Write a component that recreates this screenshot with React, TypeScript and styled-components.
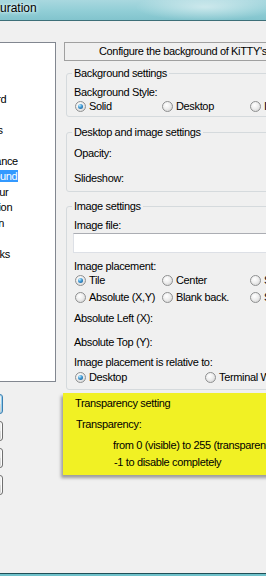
import React from 'react'
import styled, { createGlobalStyle } from 'styled-components'

const GlobalStyle = createGlobalStyle`
	html, body {
		margin: 0;
		padding: 0;
		background: #f0f0f0;
	}
	body {
		font-family: "Liberation Sans", Arial, sans-serif;
		font-size: 11px;
		letter-spacing: -0.35px;
		color: #111;
	}
	#root {
		width: 266px;
		height: 576px;
		overflow: hidden;
	}
`

const Window = styled.div`
	display: flex;
	flex-direction: column;
	width: 266px;
	height: 576px;
	overflow: hidden;
`

const TitleBar = styled.div`
	flex: none;
	height: 20px;
	display: flex;
	align-items: flex-start;
	border-bottom: 1px solid #3d6f78;
	background:
		radial-gradient(ellipse 70px 14px at 205px 7px, rgba(255, 255, 255, 0.5), rgba(255, 255, 255, 0)),
		linear-gradient(180deg, #a9d8df 0%, #91ced6 55%, #82c4cd 100%);
`

const TitleText = styled.span`
	font-size: 12px;
	line-height: 16px;
	letter-spacing: 0;
	color: #000;
	text-shadow: 0 0 5px #eaf7f9, 0 0 3px #eaf7f9;
	white-space: nowrap;
`

const Main = styled.div`
	flex: 1;
	min-height: 0;
	display: flex;
	padding-top: 21px;
	overflow: hidden;
`

const LeftCol = styled.div`
	flex: none;
	width: 56px;
	display: flex;
	flex-direction: column;
`

const TreePanel = styled.div`
	box-sizing: border-box;
	height: 340px;
	background: #fff;
	border: 1px solid #828790;
	border-left: none;
	padding-top: 2px;
	overflow: hidden;
`

const TreeList = styled.div`
	margin-left: -71px;
`

const TreeRow = styled.div<{ $level: number }>`
	height: 15.5px;
	line-height: 15.5px;
	padding-left: ${p => p.$level * 16}px;
	white-space: nowrap;
	color: #000;
`

const TreeLabel = styled.span<{ $selected?: boolean }>`
	display: inline-block;
	line-height: 12px;
	padding: 0 1px;
	background: ${p => (p.$selected ? '#3399ff' : 'transparent')};
	color: ${p => (p.$selected ? '#fff' : '#000')};
`

const ButtonStack = styled.div`
	display: flex;
	flex-direction: column;
	gap: 7px;
	width: 75px;
	margin: 12px 0 0 -72px;
`

const PushButton = styled.div<{ $default?: boolean }>`
	box-sizing: border-box;
	height: 20px;
	border: 1px solid ${p => (p.$default ? '#3c7fb1' : '#707070')};
	border-radius: 3px;
	background: linear-gradient(180deg, #f2f2f2 0%, #ebebeb 48%, #dddddd 52%, #cfcfcf 100%);
	box-shadow: ${p => (p.$default ? 'inset 0 0 0 1px #98d1ef' : 'inset 0 0 0 1px #fcfcfc')};
	text-align: center;
	line-height: 18px;
`

const RightCol = styled.div`
	flex: none;
	width: 330px;
	margin-left: 8px;
	display: flex;
	flex-direction: column;
`

const HeaderBox = styled.div`
	box-sizing: border-box;
	height: 19px;
	line-height: 17px;
	padding-left: 34px;
	border: 1px solid #a0a0a0;
	white-space: nowrap;
	color: #000;
`

const GroupBox = styled.fieldset<{ $mt: number; $pb: number }>`
	margin: ${p => p.$mt}px 0 0 2px;
	padding: 0 0 ${p => p.$pb}px 7px;
	min-width: 0;
	border: 1px solid #d5dadd;
	border-radius: 3px;
`

const Legend = styled.legend`
	padding: 0 2px;
	margin-left: -2px;
	line-height: 14px;
	color: #000;
`

const Line = styled.div<{ $mt?: number; $indent?: number }>`
	height: 14px;
	line-height: 14px;
	margin-top: ${p => p.$mt ?? 0}px;
	padding-left: ${p => p.$indent ?? 0}px;
	white-space: nowrap;
	color: #000;
`

const RadioRow = styled.div<{ $cols: string; $mt?: number }>`
	display: grid;
	grid-template-columns: ${p => p.$cols};
	align-items: center;
	height: 14px;
	margin: ${p => p.$mt ?? 0}px 0 0 1px;
	white-space: nowrap;
	color: #000;
`

const RadioItem = styled.label`
	display: flex;
	align-items: center;
	gap: 3px;
`

const RadioDot = styled.span<{ $checked?: boolean }>`
	box-sizing: border-box;
	width: 11px;
	height: 11px;
	border-radius: 50%;
	border: 1px solid #8f9091;
	background: radial-gradient(circle at 40% 35%, #ffffff 0%, #eeeeee 45%, #cdcdcd 100%);
	display: grid;
	place-items: center;
	&::after {
		content: '';
		width: 5px;
		height: 5px;
		border-radius: 50%;
		display: ${p => (p.$checked ? 'block' : 'none')};
		background: radial-gradient(circle at 35% 30%, #c4ecfc 0%, #3f98d4 45%, #0e4e84 100%);
	}
`

const TextBox = styled.div`
	box-sizing: border-box;
	height: 20px;
	margin: 1px 0 0 -1px;
	background: #fff;
	border: 1px solid #dde0e6;
	border-top-color: #abadb3;
`

const YellowNote = styled.div`
	box-sizing: border-box;
	height: 82px;
	margin: 3px 0 0 -1px;
	padding: 3px 0 0 12px;
	background: #f1f124;
	box-shadow: -2px 3px 3px rgba(0, 0, 0, 0.35);
`

const Taskbar = styled.div`
	flex: none;
	box-sizing: border-box;
	height: 3px;
	border-top: 1px solid #1f4f57;
	background: #6fc2cb;
`

function Radio(props: { label: string; checked?: boolean }) {
	return (
		<RadioItem>
			<RadioDot $checked={props.checked} />
			<span>{props.label}</span>
		</RadioItem>
	)
}

const treeItems: { label: string; level: number; selected?: boolean }[] = [
	{ label: 'Session', level: 0 },
	{ label: 'Logging', level: 1 },
	{ label: 'Terminal', level: 0 },
	{ label: 'Keyboard', level: 2 },
	{ label: 'Bell', level: 2 },
	{ label: 'Features', level: 2 },
	{ label: 'Window', level: 1 },
	{ label: 'Appearance', level: 2 },
	{ label: 'Background', level: 2, selected: true },
	{ label: 'Behaviour', level: 2 },
	{ label: 'Translation', level: 2 },
	{ label: 'Selection', level: 2 },
	{ label: 'Colours', level: 2 },
	{ label: 'Hyperlinks', level: 2 },
	{ label: 'Connection', level: 0 },
	{ label: 'Data', level: 1 },
	{ label: 'Proxy', level: 1 },
	{ label: 'Telnet', level: 1 },
	{ label: 'Rlogin', level: 1 },
	{ label: 'SSH', level: 1 },
	{ label: 'Serial', level: 1 },
]

export default function App() {
	return (
		<Window>
			<GlobalStyle />
			<TitleBar>
				<TitleText>uration</TitleText>
			</TitleBar>
			<Main>
				<LeftCol>
					<TreePanel>
						<TreeList>
							{ treeItems.map(item => (
								<TreeRow key={ item.label } $level={ item.level }>
									<TreeLabel $selected={ item.selected }>{ item.label }</TreeLabel>
								</TreeRow>
							)) }
						</TreeList>
					</TreePanel>
					<ButtonStack>
						<PushButton $default>Open</PushButton>
						<PushButton>Cancel</PushButton>
						<PushButton>About</PushButton>
						<PushButton>Help</PushButton>
					</ButtonStack>
				</LeftCol>
				<RightCol>
					<HeaderBox>Configure the background of KiTTY's window</HeaderBox>

					<GroupBox $mt={ 5 } $pb={ 3 }>
						<Legend>Background settings</Legend>
						<Line $mt={ 5 }>Background Style:</Line>
						<RadioRow $cols="87px 88px auto">
							<Radio label="Solid" checked />
							<Radio label="Desktop" />
							<Radio label="Image" />
						</RadioRow>
					</GroupBox>

					<GroupBox $mt={ 8 } $pb={ 6 }>
						<Legend>Desktop and image settings</Legend>
						<Line $mt={ 7 }>Opacity:</Line>
						<Line $mt={ 11 }>Slideshow:</Line>
					</GroupBox>

					<GroupBox $mt={ 7 } $pb={ 5 }>
						<Legend>Image settings</Legend>
						<Line $mt={ 5 }>Image file:</Line>
						<TextBox />
						<Line $mt={ 6 }>Image placement:</Line>
						<RadioRow $cols="87px 88px auto">
							<Radio label="Tile" checked />
							<Radio label="Center" />
							<Radio label="Stretch" />
						</RadioRow>
						<RadioRow $cols="87px 88px auto" $mt={ 3 }>
							<Radio label="Absolute (X,Y)" />
							<Radio label="Blank back." />
							<Radio label="Stretch (ratio)" />
						</RadioRow>
						<Line $mt={ 7 }>Absolute Left (X):</Line>
						<Line $mt={ 10 }>Absolute Top (Y):</Line>
						<Line $mt={ 6 }>Image placement is relative to:</Line>
						<RadioRow $cols="130px auto" $mt={ 1 }>
							<Radio label="Desktop" checked />
							<Radio label="Terminal Window" />
						</RadioRow>
					</GroupBox>

					<YellowNote>
						<Line>Transparency setting</Line>
						<Line $mt={ 7 } $indent={ 1 }>Transparency:</Line>
						<Line $mt={ 7 } $indent={ 38 }>from 0 (visible) to 255 (transparent)</Line>
						<Line $mt={ 3 } $indent={ 39 }>-1 to disable completely</Line>
					</YellowNote>
				</RightCol>
			</Main>
			<Taskbar />
		</Window>
	)
}
